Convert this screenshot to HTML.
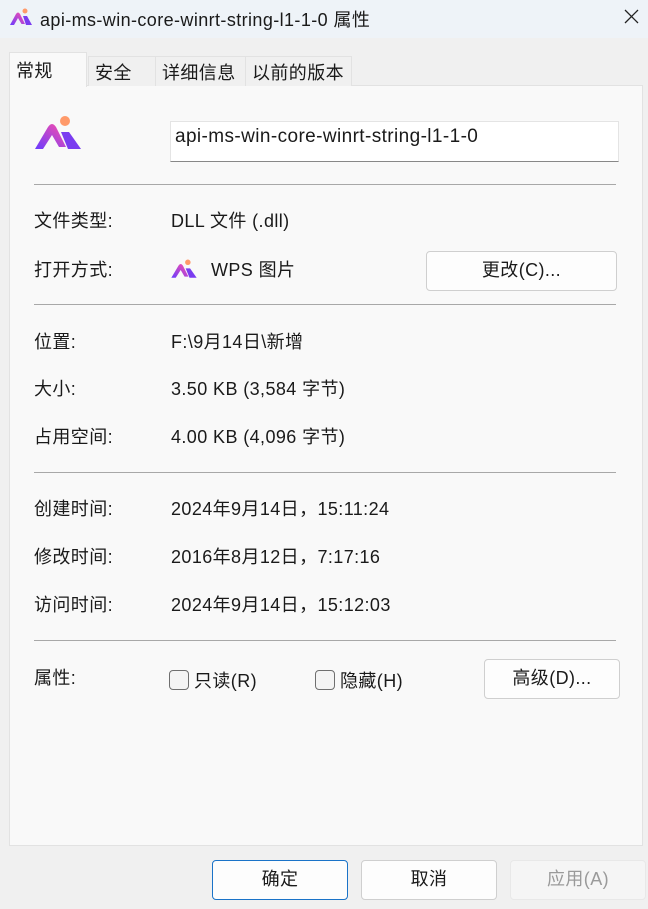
<!DOCTYPE html>
<html><head><meta charset="utf-8"><style>
*{margin:0;padding:0;box-sizing:border-box}
body{width:648px;height:909px;background:#f0f0f0;font-family:"Liberation Sans","Noto Sans CJK SC",sans-serif;color:#1a1a1a;position:relative;overflow:hidden;font-size:18px;letter-spacing:0.4px}
.a{position:absolute;white-space:nowrap}
.title{left:0;top:0;width:648px;height:38px;background:#eef3f8}
.panel{left:9px;top:85px;width:634px;height:761px;background:#f9f9f9;border:1px solid #e2e2e2}
.tab{top:56px;height:30px;background:#f0f0f0;border:1px solid #e2e2e2;border-bottom:none;font-size:18px;padding:2px 0 0 6px}
.line{left:34px;width:582px;height:1px;background:#a8a8a8}
.btn{background:#fdfdfd;border:1px solid #cfcfcf;border-radius:4px;text-align:center;line-height:36px;font-size:18px}
.lbl{left:34px}
.val{left:171px}
.cb{width:20px;height:20px;border:1px solid #6f6f6f;border-radius:4px;background:#f4f4f4}
</style></head><body>
<div class="a title"></div>
<svg class="a" style="left:9px;top:8px" width="24" height="20" viewBox="0 0 48 40"><defs><linearGradient id="g" x1="0" y1="1" x2="1" y2="0"><stop offset="0" stop-color="#6a3cff"/><stop offset="1" stop-color="#ff4fa8"/></linearGradient></defs><path d="M2 34 L14 12 Q18 6 22 12 L32 32 L25 32 L18 20 L10 34 Z" fill="url(#g)"/><circle cx="32" cy="6" r="5" fill="#ff9a6a"/><path d="M28 16 L36 16 L46 34 L34 34 Z" fill="#7a3cf0"/></svg>
<div class="a" style="left:40px;top:6px;font-size:18px">api-ms-win-core-winrt-string-l1-1-0 属性</div>
<svg class="a" style="left:624px;top:9px" width="15" height="15" viewBox="0 0 15 15"><path d="M1 1 L14 14 M14 1 L1 14" stroke="#222" stroke-width="1.3"/></svg>
<div class="a panel"></div>
<div class="a tab" style="left:88px;width:68px">安全</div>
<div class="a tab" style="left:155px;width:91px">详细信息</div>
<div class="a tab" style="left:245px;width:107px">以前的版本</div>
<div class="a tab" style="left:9px;top:52px;width:78px;height:35px;background:#f9f9f9;padding-top:4px">常规</div>
<svg class="a" style="left:34px;top:115px" width="48" height="40" viewBox="0 0 48 40"><defs><linearGradient id="g2" x1="0" y1="1" x2="1" y2="0"><stop offset="0" stop-color="#6a3cff"/><stop offset="1" stop-color="#ff4fa8"/></linearGradient></defs><path d="M1 34 L14 12 Q18 6 22 12 L32 32 L25 32 L18 20 L9 34 Z" fill="url(#g2)"/><circle cx="31" cy="6" r="5" fill="#ff9a6a"/><path d="M27 17 L35 17 L47 34 L34 34 Z" fill="#7a3cf0"/></svg>
<div class="a" style="left:170px;top:121px;width:449px;height:41px;background:#fff;border:1px solid #e4e4e4;border-bottom:1px solid #888;padding:4px 0 0 4px;font-size:19px">api-ms-win-core-winrt-string-l1-1-0</div>
<div class="a line" style="top:184px"></div>
<div class="a lbl" style="top:207px">文件类型:</div><div class="a val" style="top:207px">DLL 文件 (.dll)</div>
<div class="a lbl" style="top:256px">打开方式:</div>
<svg class="a" style="left:170px;top:259px" width="28" height="22" viewBox="0 0 48 40"><defs><linearGradient id="g3" x1="0" y1="1" x2="1" y2="0"><stop offset="0" stop-color="#6a3cff"/><stop offset="1" stop-color="#ff4fa8"/></linearGradient></defs><path d="M1 34 L14 12 Q18 6 22 12 L32 32 L25 32 L18 20 L9 34 Z" fill="url(#g3)"/><circle cx="31" cy="6" r="5" fill="#ff9a6a"/><path d="M27 17 L35 17 L47 34 L34 34 Z" fill="#7a3cf0"/></svg>
<div class="a" style="left:211px;top:256px">WPS 图片</div>
<div class="a btn" style="left:426px;top:251px;width:191px;height:40px">更改(C)...</div>
<div class="a line" style="top:304px"></div>
<div class="a lbl" style="top:328px">位置:</div><div class="a val" style="top:328px">F:\9月14日\新增</div>
<div class="a lbl" style="top:375px">大小:</div><div class="a val" style="top:375px">3.50 KB (3,584 字节)</div>
<div class="a lbl" style="top:423px">占用空间:</div><div class="a val" style="top:423px">4.00 KB (4,096 字节)</div>
<div class="a line" style="top:472px"></div>
<div class="a lbl" style="top:495px">创建时间:</div><div class="a val" style="top:495px">2024年9月14日，15:11:24</div>
<div class="a lbl" style="top:543px">修改时间:</div><div class="a val" style="top:543px">2016年8月12日，7:17:16</div>
<div class="a lbl" style="top:591px">访问时间:</div><div class="a val" style="top:591px">2024年9月14日，15:12:03</div>
<div class="a line" style="top:640px"></div>
<div class="a lbl" style="top:664px">属性:</div>
<div class="a cb" style="left:169px;top:670px"></div><div class="a" style="left:194px;top:667px">只读(R)</div>
<div class="a cb" style="left:315px;top:670px"></div><div class="a" style="left:340px;top:667px">隐藏(H)</div>
<div class="a btn" style="left:484px;top:659px;width:136px;height:40px">高级(D)...</div>
<div class="a btn" style="left:212px;top:860px;width:136px;height:40px;border-color:#1a73c8">确定</div>
<div class="a btn" style="left:361px;top:860px;width:136px;height:40px">取消</div>
<div class="a btn" style="left:510px;top:860px;width:136px;height:40px;background:#f5f5f5;border-color:#e8e8e8;color:#9a9a9a">应用(A)</div>
</body></html>
